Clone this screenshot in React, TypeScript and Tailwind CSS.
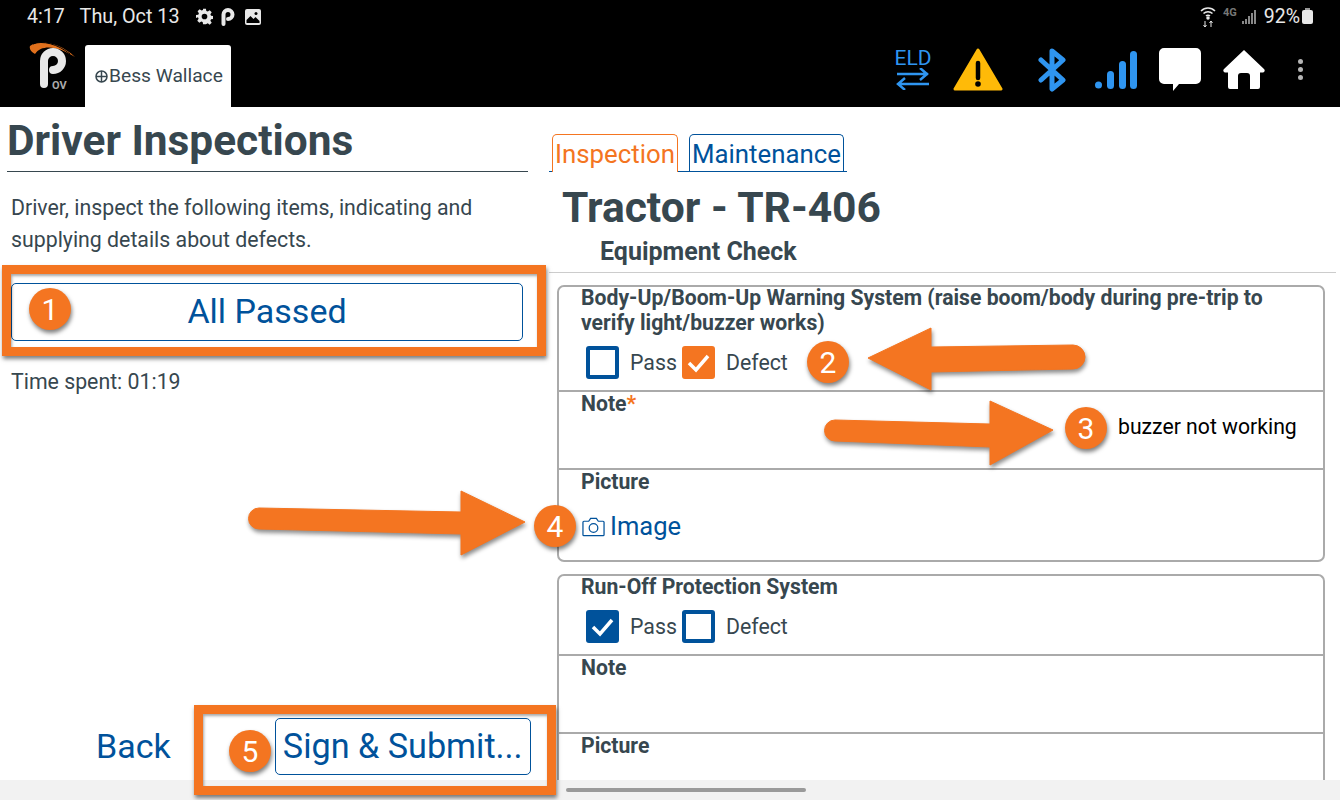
import React from "react";

const Badge = ({ n, cls }: { n: string; cls: string }) => (
  <div className={`absolute w-[42px] h-[42px] rounded-full bg-[#f47521] text-white flex items-center justify-center text-[30px] shadow-[1px_3px_4px_rgba(0,0,0,0.5)] ${cls}`}>{n}</div>
);

const Arrow = ({ d }: { d: string }) => (
  <path d={d} fill="#f47521" stroke="#f47521" strokeWidth="1" strokeLinejoin="round" style={{ filter: "drop-shadow(1px 3px 2px rgba(0,0,0,0.45))" }} />
);

const Check = ({ on, color }: { on: boolean; color: string }) => (
  <span className="w-[33px] h-[33px] rounded-[3px] border-[4px] flex items-center justify-center shrink-0" style={{ borderColor: color, background: on ? color : "transparent" }}>
    {on && (
      <svg width="25" height="25" viewBox="0 0 25 25"><path d="M3 13l7 7L22 6" fill="none" stroke="#fff" strokeWidth="3.5" /></svg>
    )}
  </span>
);

const Row = ({ className = "", children }: { className?: string; children: React.ReactNode }) => (
  <div className={`flow-root px-[22px] border-b-[2px] border-[#aaaaaa] last:border-b-0 ${className}`}>{children}</div>
);

const Label = ({ children, tight = false }: { children: React.ReactNode; tight?: boolean }) => (
  <div className={`text-[21.2px] leading-[25px] font-bold text-[#37474f] ${tight ? "-mt-[2px]" : "-mt-[1px]"}`}>{children}</div>
);

const Choices = ({ pass, defect, cls }: { pass: boolean; defect: boolean; cls: string }) => (
  <div className={`flex items-center text-[21.3px] text-[#37474f] ml-[5px] ${cls}`}>
    <Check on={pass} color="#00529b" />
    <span className="ml-[11px] w-[52px]">Pass</span>
    <Check on={defect} color={defect ? "#f47521" : "#00529b"} />
    <span className="ml-[11px]">Defect</span>
  </div>
);

export default function App() {
  return (
    <div className="relative w-[1340px] h-[800px] overflow-hidden bg-white font-['Roboto',sans-serif]">
      <header className="h-[107px] bg-black flex flex-col">
        <div className="h-[32px] pt-[1px] flex items-center pl-[27px] pr-[27px] text-[#e8e8e8] text-[19.5px]">
          <span>4:17</span>
          <span className="ml-[15px] text-[19.8px]">Thu, Oct 13</span>
          <svg className="ml-[16px]" width="17" height="17" viewBox="0 0 24 24" fill="#e8e8e8">
            <path fillRule="evenodd" d="M10 1h4l.6 3.200 2 .9 2.700-1.900 2.900 2.900-1.900 2.700.9 2 3.200.6v4l-3.200.6-.9 2 1.900 2.700-2.900 2.900-2.700-1.900-2 .9L14 23h-4l-.6-3.200-2-.9-2.700 1.900-2.900-2.900 1.900-2.700-.9-2L0 14v-4l3.200-.6.9-2L2.200 4.700 5.100 1.800l2.700 1.900 2-.9zM12 8a4 4 0 100 8 4 4 0 000-8z" />
          </svg>
          <svg className="ml-[8px]" width="14" height="18" viewBox="0 0 14 18">
            <path d="M2.500 16V6.500a4.500 4.500 0 114.500 4.500" fill="none" stroke="#e8e8e8" strokeWidth="4" strokeLinecap="round" />
          </svg>
          <svg className="ml-[10px]" width="16" height="16" viewBox="0 0 16 16">
            <rect width="16" height="16" rx="2" fill="#e8e8e8" />
            <path d="M1.500 11l4-4 3 3 2-2 4 4v2h-13z" fill="#000" />
            <circle cx="11" cy="4.500" r="1.500" fill="#000" />
          </svg>
          <div className="ml-auto flex items-center">
            <svg width="16" height="22" viewBox="0 0 16 22" fill="none" stroke="#e8e8e8" strokeWidth="1.500">
              <path d="M1 5c4-4 10-4 14 0M3.500 7.500c2.500-2.500 6.500-2.500 9 0M6 10c1-1 3-1 4 0" />
              <circle cx="8" cy="12" r="1" fill="#e8e8e8" />
              <path d="M5 15v6M3.500 19l1.500 2 1.500-2M11 21v-6M9.500 17l1.500-2 1.500 2" strokeWidth="1" />
            </svg>
            <span className="ml-[7px] text-[11px] font-bold text-[#777] leading-none -mt-[8px]">4G</span>
            <svg className="ml-[5px]" width="16" height="16" viewBox="0 0 16 16" fill="#888">
              <rect x="0" y="12" width="2" height="3" /><rect x="3" y="10" width="2" height="5" /><rect x="6" y="7" width="2" height="8" /><rect x="9" y="4" width="2" height="11" /><rect x="12" y="1" width="2" height="14" />
            </svg>
            <span className="ml-[6px]">92%</span>
            <span className="ml-[2px] relative w-[11px] h-[14px] bg-[#e8e8e8] rounded-[2px] mt-[1px]">
              <span className="absolute -top-[2px] left-[3px] w-[5px] h-[2px] bg-[#999]" />
            </span>
          </div>
        </div>
        <div className="flex-1 flex items-end relative">
          <svg className="absolute left-[28px] top-[8px]" width="50" height="52" viewBox="0 0 50 52">
            <path d="M2 6C10-1 32 2 47 17 32 7 14 3 7 14 3 12 1 9 2 6z" fill="#e0701c" />
            <path d="M5 4C14 0 30 4 42 14" fill="none" stroke="#000" strokeWidth="1" />
            <path d="M16 44V21a9 9 0 119 9" fill="none" stroke="#e8e8e8" strokeWidth="8" strokeLinecap="round" />
            <text x="24" y="49" fill="#aaa" fontSize="11" fontWeight="700" fontFamily="Roboto">OV</text>
          </svg>
          <div className="ml-[85px] w-[146px] h-[62px] bg-white rounded-t-[3px] flex items-center pl-[10px] text-[19.2px] text-[#37474f]">
            <svg width="13" height="13" viewBox="0 0 13 13" fill="none" stroke="#37474f" strokeWidth="1.500" className="mr-[1px]">
              <circle cx="6.500" cy="6.500" r="5.500" /><path d="M6.500 1v11M1 6.500h11" />
            </svg>
            Bess Wallace
          </div>
          <div className="ml-auto flex items-center h-full pr-[37px]">
            <div className="w-[38px] flex flex-col items-center text-[#2f95f0]">
              <span className="text-[21px] leading-[19px]">ELD</span>
              <svg width="36" height="22" viewBox="0 0 36 22" fill="none" stroke="#2f95f0" strokeWidth="2.500">
                <path d="M2 6h31M25 0l7 6-7 6M34 16H3M10 10l-7 6 7 6" />
              </svg>
            </div>
            <svg className="ml-[21px]" width="50" height="44" viewBox="0 0 50 44">
              <path d="M25 2L48 41H2z" fill="#ffba08" stroke="#ffba08" strokeWidth="3" strokeLinejoin="round" />
              <path d="M25 15v15" stroke="#000" strokeWidth="4.500" strokeLinecap="round" />
              <circle cx="25" cy="36" r="2.800" fill="#000" />
            </svg>
            <svg className="ml-[35px]" width="28" height="44" viewBox="0 0 28 44" fill="none" stroke="#2f95f0" strokeWidth="5" strokeLinejoin="round" strokeLinecap="round">
              <path d="M3 12l22 20-11 9V3l11 9L3 32" />
            </svg>
            <svg className="ml-[29px]" width="42" height="40" viewBox="0 0 42 40" fill="#2f95f0">
              <circle cx="3.500" cy="35" r="3.500" />
              <rect x="12" y="21" width="7" height="18" rx="3.500" />
              <rect x="24" y="11" width="7" height="28" rx="3.500" />
              <rect x="35" y="1" width="7" height="38" rx="3.500" />
            </svg>
            <svg className="ml-[22px]" width="42" height="44" viewBox="0 0 42 44" fill="#fff">
              <path d="M5 0h32a5 5 0 015 5v26a5 5 0 01-5 5H20l-6 7v-7H5a5 5 0 01-5-5V5a5 5 0 015-5z" />
            </svg>
            <svg className="ml-[22px]" width="42" height="40" viewBox="0 0 42 40" fill="#fff">
              <path d="M21 0L41 19a2 2 0 01-1 3.500H37V37a2 2 0 01-2 2H27V26a3 3 0 00-3-3h-6a3 3 0 00-3 3v13H7a2 2 0 01-2-2V22.500H2A2 2 0 011 19z" />
            </svg>
            <div className="ml-[33px] flex flex-col gap-[3px]">
              <span className="w-[5px] h-[5px] rounded-full bg-[#b5b5b5]" />
              <span className="w-[5px] h-[5px] rounded-full bg-[#b5b5b5]" />
              <span className="w-[5px] h-[5px] rounded-full bg-[#b5b5b5]" />
            </div>
          </div>
        </div>
      </header>

      <main className="flex h-[673px] text-[#37474f]">
        <section className="w-[549px] shrink-0 flex flex-col">
          <h1 className="ml-[7px] mr-[21px] h-[65px] pt-[10px] border-b border-[#37474f] text-[42.4px] leading-[48px] font-bold">Driver Inspections</h1>
          <p className="ml-[11px] mt-[20px] text-[21.3px] leading-[32px]">
            Driver, inspect the following items, indicating and<br />supplying details about defects.
          </p>
          <button className="ml-[11px] mt-[27px] pb-[2px] w-[512px] h-[58px] shrink-0 border border-[#00529b] rounded-[5px] text-[34px] text-[#00529b]">All Passed</button>
          <p className="ml-[11px] mt-[25px] text-[21.3px] leading-[32px]">Time spent: 01:19</p>
          <div className="mt-auto flex items-center ml-[96px] mb-[5px]">
            <span className="text-[34px] text-[#00529b]">Back</span>
            <button className="ml-[104px] w-[256px] h-[57px] border border-[#00529b] rounded-[5px] text-[34.2px] text-[#00529b]">Sign &amp; Submit...</button>
          </div>
        </section>

        <section className="flex-1 min-w-0 pr-[4px] flex flex-col">
          <div className="mt-[27px] h-[38px] w-[298px] shrink-0 flex items-end border-b border-[#00529b] pl-[3px] gap-[11px] text-[25.8px]">
            <div className="h-[38px] w-[126px] -mb-px bg-white border border-b-0 border-[#f47521] rounded-t-[5px] text-[#f47521] text-center leading-[38px]">Inspection</div>
            <div className="h-[37px] w-[155px] border border-b-0 border-[#00529b] rounded-t-[5px] text-[#00529b] text-center leading-[38px]">Maintenance</div>
          </div>
          <h2 className="ml-[13px] mt-[11px] shrink-0 text-[42.6px] leading-[48px] font-bold">Tractor - TR-406</h2>
          <div className="h-[42px] shrink-0 pt-[6px] border-b border-[#cccccc] pl-[51px] text-[25px] leading-[30px] font-bold">Equipment Check</div>
          <div className="ml-[8px] mr-[11px] mt-[12px] shrink-0 flex flex-col gap-[12px]">
            <div className="h-[277px] border-[2px] border-[#aaaaaa] rounded-[7px]">
              <Row className="h-[105px]">
                <Label tight>Body-Up/Boom-Up Warning System (raise boom/body during pre-trip to verify light/buzzer works)</Label>
                <Choices pass={false} defect={true} cls="mt-[11px]" />
              </Row>
              <Row className="h-[78px]"><Label><span>Note<span className="text-[#f47521]">*</span></span></Label></Row>
              <Row className="h-[90px]">
                <Label>Picture</Label>
                <div className="flex items-center mt-[13px] ml-[1px] text-[25.5px] text-[#00529b]">
                  <svg width="23" height="20" viewBox="0 0 24 20" fill="none" stroke="#00529b" strokeWidth="1.300" className="mr-[5px] mt-[1px]">
                    <path d="M2 4h5l2-3h6l2 3h5a1 1 0 011 1v13a1 1 0 01-1 1H2a1 1 0 01-1-1V5a1 1 0 011-1z" />
                    <circle cx="12" cy="11" r="4.500" />
                  </svg>
                  Image
                </div>
              </Row>
            </div>
            <div className="h-[260px] border-[2px] border-[#aaaaaa] rounded-t-[7px] border-b-0">
              <Row className="h-[80px]">
                <Label tight>Run-Off Protection System</Label>
                <Choices pass={true} defect={false} cls="mt-[11px]" />
              </Row>
              <Row className="h-[78px]"><Label>Note</Label></Row>
              <Row><Label>Picture</Label></Row>
            </div>
          </div>
        </section>
      </main>

      <footer className="absolute left-0 right-0 bottom-0 h-[20px] bg-[#f2f2f2] flex items-center">
        <div className="ml-[566px] w-[240px] h-[4px] rounded-full bg-[#9a9a9a]" />
      </footer>

      <div className="absolute left-[1118px] top-[413px] text-[21.2px] leading-[28px] text-black">buzzer not working</div>

      <div className="absolute left-[2px] top-[265px] w-[544px] h-[91px] border-[9px] border-[#f47521] shadow-[1px_3px_4px_rgba(0,0,0,0.5),inset_1px_2px_3px_rgba(0,0,0,0.35)]" />
      <div className="absolute left-[194px] top-[705px] w-[362px] h-[90px] border-[9px] border-[#f47521] shadow-[1px_3px_4px_rgba(0,0,0,0.5),inset_1px_2px_3px_rgba(0,0,0,0.35)]" />

      <svg className="absolute left-0 top-0 pointer-events-none" width="1340" height="800">
        <Arrow d="M868 358L931 328V347L1073 345A12 12 0 011073 369L931 372V390z" />
        <Arrow d="M1053 430L990 401V424L835 420A10.500 10.500 0 00835 441L990 447V465z" />
        <Arrow d="M525 522L461 491V512L259 508A10.500 10.500 0 00259 529L461 534V555z" />
      </svg>

      <Badge n="1" cls="left-[29px] top-[288px]" />
      <Badge n="2" cls="left-[807px] top-[341px]" />
      <Badge n="3" cls="left-[1065px] top-[407px]" />
      <Badge n="4" cls="left-[534px] top-[505px]" />
      <Badge n="5" cls="left-[229px] top-[730px]" />
    </div>
  );
}
